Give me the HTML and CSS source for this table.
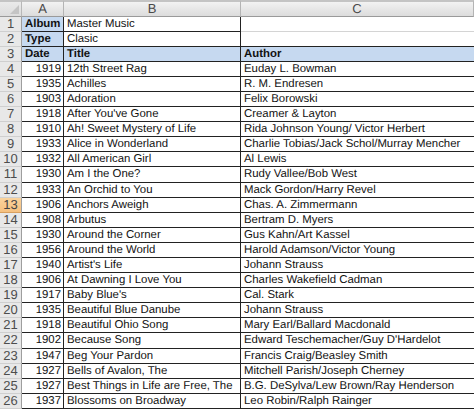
FILE: index.html
```html
<!DOCTYPE html>
<html>
<head>
<meta charset="utf-8">
<link rel="stylesheet" href="styles.css">
</head>
<body>
<div class="sheet">
  <div class="corner"><span class="tri"></span></div>
  <div class="colh">A</div>
  <div class="colh">B</div>
  <div class="colh">C</div>

  <div class="rowh">1</div><div class="c a lbl blue">Album</div><div class="c b">Master Music</div><div class="c g g1"></div>
  <div class="rowh">2</div><div class="c a lbl blue">Type</div><div class="c b">Clasic</div><div class="c g g2"></div>
  <div class="rowh">3</div><div class="c a lbl blue">Date</div><div class="c b lbl blue">Title</div><div class="c cc lbl blue">Author</div>

  <div class="rowh">4</div><div class="c a num">1919</div><div class="c b">12th Street Rag</div><div class="c cc">Euday L. Bowman</div>
  <div class="rowh">5</div><div class="c a num">1935</div><div class="c b">Achilles</div><div class="c cc">R. M. Endresen</div>
  <div class="rowh">6</div><div class="c a num">1903</div><div class="c b">Adoration</div><div class="c cc">Felix Borowski</div>
  <div class="rowh">7</div><div class="c a num">1918</div><div class="c b">After You've Gone</div><div class="c cc">Creamer &amp; Layton</div>
  <div class="rowh">8</div><div class="c a num">1910</div><div class="c b">Ah! Sweet Mystery of Life</div><div class="c cc">Rida Johnson Young/ Victor Herbert</div>
  <div class="rowh">9</div><div class="c a num">1933</div><div class="c b">Alice in Wonderland</div><div class="c cc">Charlie Tobias/Jack Schol/Murray Mencher</div>
  <div class="rowh">10</div><div class="c a num">1932</div><div class="c b">All American Girl</div><div class="c cc">Al Lewis</div>
  <div class="rowh">11</div><div class="c a num">1930</div><div class="c b">Am I the One?</div><div class="c cc">Rudy Vallee/Bob West</div>
  <div class="rowh">12</div><div class="c a num">1933</div><div class="c b">An Orchid to You</div><div class="c cc">Mack Gordon/Harry Revel</div>
  <div class="rowh sel">13</div><div class="c a num">1906</div><div class="c b">Anchors Aweigh</div><div class="c cc">Chas. A. Zimmermann</div>
  <div class="rowh">14</div><div class="c a num">1908</div><div class="c b">Arbutus</div><div class="c cc">Bertram D. Myers</div>
  <div class="rowh">15</div><div class="c a num">1930</div><div class="c b">Around the Corner</div><div class="c cc">Gus Kahn/Art Kassel</div>
  <div class="rowh">16</div><div class="c a num">1956</div><div class="c b">Around the World</div><div class="c cc">Harold Adamson/Victor Young</div>
  <div class="rowh">17</div><div class="c a num">1940</div><div class="c b">Artist's Life</div><div class="c cc">Johann Strauss</div>
  <div class="rowh">18</div><div class="c a num">1906</div><div class="c b">At Dawning I Love You</div><div class="c cc">Charles Wakefield Cadman</div>
  <div class="rowh">19</div><div class="c a num">1917</div><div class="c b">Baby Blue's</div><div class="c cc">Cal. Stark</div>
  <div class="rowh">20</div><div class="c a num">1935</div><div class="c b">Beautiful Blue Danube</div><div class="c cc">Johann Strauss</div>
  <div class="rowh">21</div><div class="c a num">1918</div><div class="c b">Beautiful Ohio Song</div><div class="c cc">Mary Earl/Ballard Macdonald</div>
  <div class="rowh">22</div><div class="c a num">1902</div><div class="c b">Because Song</div><div class="c cc">Edward Teschemacher/Guy D'Hardelot</div>
  <div class="rowh">23</div><div class="c a num">1947</div><div class="c b">Beg Your Pardon</div><div class="c cc">Francis Craig/Beasley Smith</div>
  <div class="rowh">24</div><div class="c a num">1927</div><div class="c b">Bells of Avalon, The</div><div class="c cc">Mitchell Parish/Joseph Cherney</div>
  <div class="rowh">25</div><div class="c a num">1927</div><div class="c b">Best Things in Life are Free, The</div><div class="c cc">B.G. DeSylva/Lew Brown/Ray Henderson</div>
  <div class="rowh">26</div><div class="c a num">1937</div><div class="c b">Blossoms on Broadway</div><div class="c cc">Leo Robin/Ralph Rainger</div>
</div>
</body>
</html>
```
FILE: styles.css
```css
html, body {
  margin: 0;
  padding: 0;
  background: #ffffff;
}
body {
  width: 474px;
  height: 409px;
  overflow: hidden;
  font-family: "Liberation Sans", Arial, sans-serif;
}
.sheet {
  display: grid;
  grid-template-columns: 22px 42px 177px 233px;
  grid-template-rows: 16.5px repeat(26, 15.1px);
  font-size: 11.4px;
  text-rendering: geometricPrecision;
  color: #111111;
}
.corner {
  position: relative;
  background: linear-gradient(#eaeaea, #dcdcdc);
  border-top: 2px solid #c4c4c4;
  border-right: 1px solid #b8b8b8;
  border-bottom: 1px solid #9a9a9a;
  box-sizing: border-box;
}
.tri {
  position: absolute;
  right: 2px;
  bottom: 2px;
  width: 0;
  height: 0;
  border-left: 9px solid transparent;
  border-bottom: 9px solid #c4c4c4;
}
.colh {
  background: linear-gradient(#f2f2f2, #dcdcdc);
  border-top: 2px solid #c4c4c4;
  border-right: 1px solid #b4b4b4;
  border-bottom: 1px solid #9a9a9a;
  box-sizing: border-box;
  text-align: center;
  font-size: 13px;
  line-height: 14px;
  color: #4a4a4a;
}
.rowh {
  background: #e8e8e8;
  border-right: 1px solid #9e9e9e;
  border-bottom: 1px solid #cfcfcf;
  box-sizing: border-box;
  text-align: center;
  font-size: 13px;
  line-height: 14px;
  color: #4d4d4d;
}
.rowh.sel {
  background: linear-gradient(#fad39d, #f5c07f);
  color: #444;
  border-bottom-color: #d8a060;
}
.c {
  box-sizing: border-box;
  border-right: 1px solid #222;
  border-bottom: 1px solid #222;
  padding: 0 2px 0 3px;
  line-height: 14px;
  white-space: nowrap;
  overflow: hidden;
}
.num {
  text-align: right;
}
.lbl {
  font-weight: bold;
}
.blue {
  background: #c6d9f0;
}
.g {
  border-right: none;
}
.g1 {
  border-bottom: 1px solid #d4d4d4;
}
.g2 {
  border-bottom: 1px solid #222;
}
.cc {
  border-right: none;
}
```
